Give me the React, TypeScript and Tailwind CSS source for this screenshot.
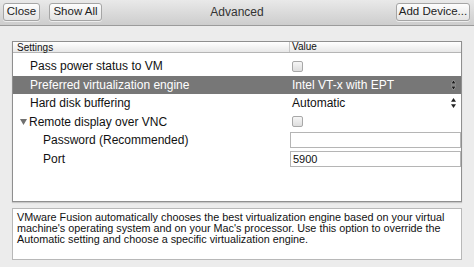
import React from 'react';

const font = { fontFamily: '"Liberation Sans", Arial, sans-serif' };

const Button: React.FC<{ label: string; className?: string }> = ({ label, className }) => (
  <div
    className={`h-[18px] flex items-center justify-center rounded-[3px] border border-[#a5a5a5] bg-gradient-to-b from-[#fdfdfd] to-[#e4e4e4] text-[11.5px] text-[#222] shadow-[0_1px_0_rgba(255,255,255,0.6)] ${className ?? ''}`}
  >
    {label}
  </div>
);

const Checkbox: React.FC = () => (
  <div className="w-[11px] h-[11px] rounded-[2px] border border-[#a8a8a8] bg-gradient-to-b from-[#f6f6f6] to-[#dedede]" />
);

const Stepper: React.FC<{ light?: boolean }> = ({ light }) => (
  <svg width="5" height="10" viewBox="0 0 5 10" className="mr-[5px]">
    <path d="M2.5 0 L5 3.8 L0 3.8 Z" fill={light ? '#1a1a1a' : '#222'} stroke={light ? '#e8e8e8' : 'none'} strokeWidth="0.4" />
    <path d="M2.5 10 L5 6.2 L0 6.2 Z" fill={light ? '#1a1a1a' : '#222'} stroke={light ? '#e8e8e8' : 'none'} strokeWidth="0.4" />
  </svg>
);

interface RowProps {
  label: string;
  indent?: number;
  selected?: boolean;
  expander?: boolean;
  children?: React.ReactNode;
}

const Row: React.FC<RowProps> = ({ label, indent = 0, selected, expander, children }) => (
  <div className={`h-[18.5px] flex items-center ${selected ? 'bg-[#777777] text-white' : 'text-[#111]'}`}>
    <div className="w-[276px] flex items-center text-[12px]" style={{ paddingLeft: indent }}>
      {expander && (
        <svg width="7" height="6" viewBox="0 0 7 6" className="mr-[2px]">
          <path d="M0 0 L7 0 L3.5 6 Z" fill="#707070" />
        </svg>
      )}
      {label}
    </div>
    <div className="flex-1 flex items-center pl-[3px] text-[12px]">{children}</div>
  </div>
);

export default function App() {
  return (
    <div className="w-[474px] h-[267px] bg-[#ececec] flex flex-col" style={font}>
      <div className="h-[26px] flex items-center px-[3px] pb-[2px] bg-gradient-to-b from-[#e9e9e9] to-[#cdcdcd] border-b border-[#9b9b9b]">
        <Button label="Close" className="w-[37px]" />
        <Button label="Show All" className="w-[53px] ml-[9px]" />
        <div className="flex-1 text-center text-[12px] text-[#333] pr-[24px]">Advanced</div>
        <Button label="Add Device..." className="w-[74px] mr-[1px]" />
      </div>
      <div className="flex-1 flex flex-col px-[12px] pt-[15px] pb-[7px]">
        <div className="h-[161px] border border-[#8f8f8f] bg-white shadow-[0_1px_1px_rgba(0,0,0,0.15)] flex flex-col">
          <div className="h-[11px] flex items-center text-[10px] text-[#111] bg-gradient-to-b from-white to-[#e8e8e8] border-b border-[#b5b5b5]">
            <div className="w-[276px] pl-[4px]">Settings</div>
            <div className="flex-1 border-l border-[#c8c8c8] pl-[2px] leading-[10px]">Value</div>
          </div>
          <div className="pt-[4px] flex flex-col">
            <Row label="Pass power status to VM" indent={17}>
              <Checkbox />
            </Row>
            <Row label="Preferred virtualization engine" indent={17} selected>
              <span className="flex-1">Intel VT-x with EPT</span>
              <Stepper light />
            </Row>
            <Row label="Hard disk buffering" indent={17}>
              <span className="flex-1">Automatic</span>
              <Stepper />
            </Row>
            <Row label="Remote display over VNC" indent={7} expander>
              <Checkbox />
            </Row>
            <Row label="Password (Recommended)" indent={30}>
              <div className="w-[171px] h-[16px] border border-[#b5b5b5] -ml-[2px]" />
            </Row>
            <Row label="Port" indent={30}>
              <div className="w-[171px] h-[16px] border border-[#b5b5b5] -ml-[2px] flex items-center pl-[2px] text-[11px]">5900</div>
            </Row>
          </div>
        </div>
        <div className="mt-[6px] h-[52px] border border-[#b8b8b8] bg-white px-[4px] pt-[3px] text-[10.8px] leading-[11px] text-[#111]">
          VMware Fusion automatically chooses the best virtualization engine based on your virtual machine's operating system and on your Mac's processor. Use this option to override the Automatic setting and choose a specific virtualization engine.
        </div>
      </div>
    </div>
  );
}
